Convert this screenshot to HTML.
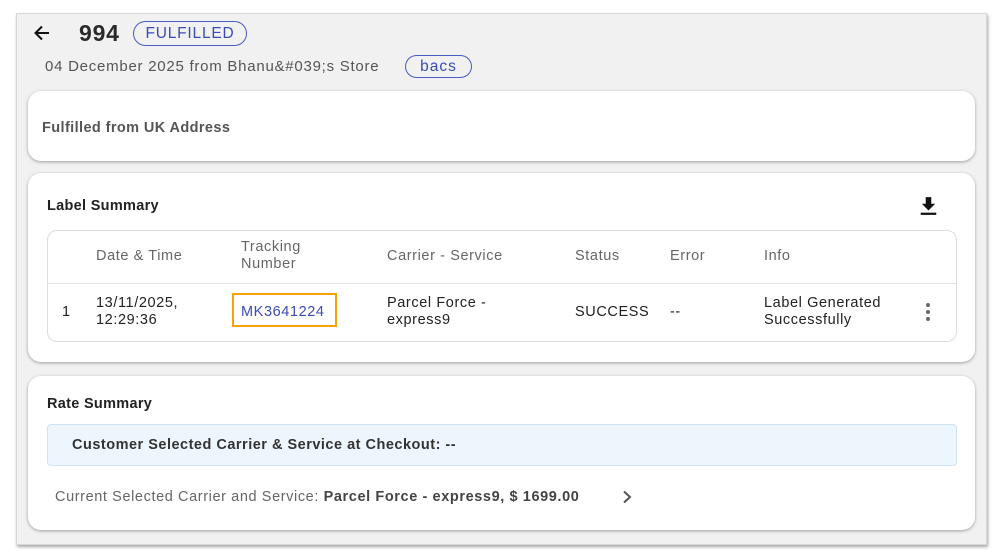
<!DOCTYPE html>
<html><head><meta charset="utf-8"><style>
*{box-sizing:border-box;margin:0;padding:0}
body{width:1000px;height:555px;background:#fff;font-family:"Liberation Sans",sans-serif;position:relative;overflow:hidden}
.panel{position:absolute;left:16px;top:13px;width:971px;height:532px;background:#f1f1f1;border:1px solid #d8d8d8;box-shadow:1px 2px 3px rgba(0,0,0,.35)}
.a{position:absolute;white-space:nowrap}
.card{position:absolute;left:28px;width:947px;background:#fff;border-radius:13px;box-shadow:0 1px 3px rgba(0,0,0,.35)}
.pill{position:absolute;border:1.5px solid #4a5bc2;border-radius:14px;color:#3a4bb8;text-align:center}
.th{color:#666;font-size:14.5px;letter-spacing:.6px}
.td{color:#222;font-size:14.5px;letter-spacing:.6px;line-height:17px}
</style></head><body>
<div class="panel"></div>
<svg class="a" style="left:33px;top:24px" width="18" height="18" viewBox="0 0 18 18"><path d="M16 9H3M9 2.5L2.5 9 9 15.5" stroke="#111" stroke-width="2" fill="none"/></svg>
<div class="a" style="left:79px;top:20px;font-size:23px;font-weight:bold;color:#2a2a2a;letter-spacing:.8px">994</div>
<div class="pill" style="left:133px;top:21px;width:114px;height:25px;font-size:15.5px;line-height:23px;letter-spacing:.8px">FULFILLED</div>
<div class="a" style="left:45px;top:58px;font-size:15px;color:#555;letter-spacing:.75px">04 December 2025 from Bhanu&amp;#039;s Store</div>
<div class="pill" style="left:405px;top:55px;width:67px;height:23px;font-size:15.5px;line-height:21px;letter-spacing:1px">bacs</div>

<div class="card" style="top:91px;height:70px"></div>
<div class="a" style="left:42px;top:120px;font-size:14.5px;font-weight:bold;color:#555;letter-spacing:.4px">Fulfilled from UK Address</div>

<div class="card" style="top:173px;height:189px"></div>
<div class="a" style="left:47px;top:198px;font-size:14.5px;font-weight:bold;color:#222;letter-spacing:.3px">Label Summary</div>
<svg class="a" style="left:919px;top:196px" width="19" height="20" viewBox="0 0 17 18"><path d="M6 1h5v6h3.5L8.5 13 2.5 7H6z" fill="#111"/><rect x="1.5" y="15" width="14" height="2" fill="#111"/></svg>
<div class="a" style="left:47px;top:230px;width:910px;height:112px;border:1px solid #ddd;border-radius:10px"></div>
<div class="a" style="left:48px;top:283px;width:908px;height:1px;background:#e2e2e2"></div>
<div class="a th" style="left:96px;top:248px">Date &amp; Time</div>
<div class="a th" style="left:241px;top:239px;line-height:17px">Tracking<br>Number</div>
<div class="a th" style="left:387px;top:248px">Carrier - Service</div>
<div class="a th" style="left:575px;top:248px">Status</div>
<div class="a th" style="left:670px;top:248px">Error</div>
<div class="a th" style="left:764px;top:248px">Info</div>
<div class="a td" style="left:62px;top:304px">1</div>
<div class="a td" style="left:96px;top:295px">13/11/2025,<br>12:29:36</div>
<div class="a" style="left:232px;top:293px;width:105px;height:34px;border:2px solid #f5a20a"></div>
<div class="a td" style="left:241px;top:304px;color:#3a4bb8">MK3641224</div>
<div class="a td" style="left:387px;top:295px">Parcel Force -<br>express9</div>
<div class="a td" style="left:575px;top:304px">SUCCESS</div>
<div class="a td" style="left:670px;top:304px">--</div>
<div class="a td" style="left:764px;top:295px">Label Generated<br>Successfully</div>
<svg class="a" style="left:924px;top:302px" width="8" height="20"><circle cx="4" cy="3" r="2" fill="#666"/><circle cx="4" cy="10" r="2" fill="#666"/><circle cx="4" cy="17" r="2" fill="#666"/></svg>

<div class="card" style="top:376px;height:154px"></div>
<div class="a" style="left:47px;top:396px;font-size:14.5px;font-weight:bold;color:#222;letter-spacing:.3px">Rate Summary</div>
<div class="a" style="left:47px;top:424px;width:910px;height:42px;background:#eef6fd;border:1px solid #cfe4f2;border-radius:4px"></div>
<div class="a" style="left:72px;top:437px;font-size:14.5px;font-weight:bold;color:#333;letter-spacing:.5px">Customer Selected Carrier &amp; Service at Checkout: --</div>
<div class="a" style="left:55px;top:489px;font-size:14.5px;color:#666;letter-spacing:.6px">Current Selected Carrier and Service: <b style="color:#444">Parcel Force - express9, $ 1699.00</b></div>
<svg class="a" style="left:622px;top:490px" width="10" height="14"><path d="M2 1.5L8 7 2 12.5" stroke="#555" stroke-width="2" fill="none"/></svg>
</body></html>
